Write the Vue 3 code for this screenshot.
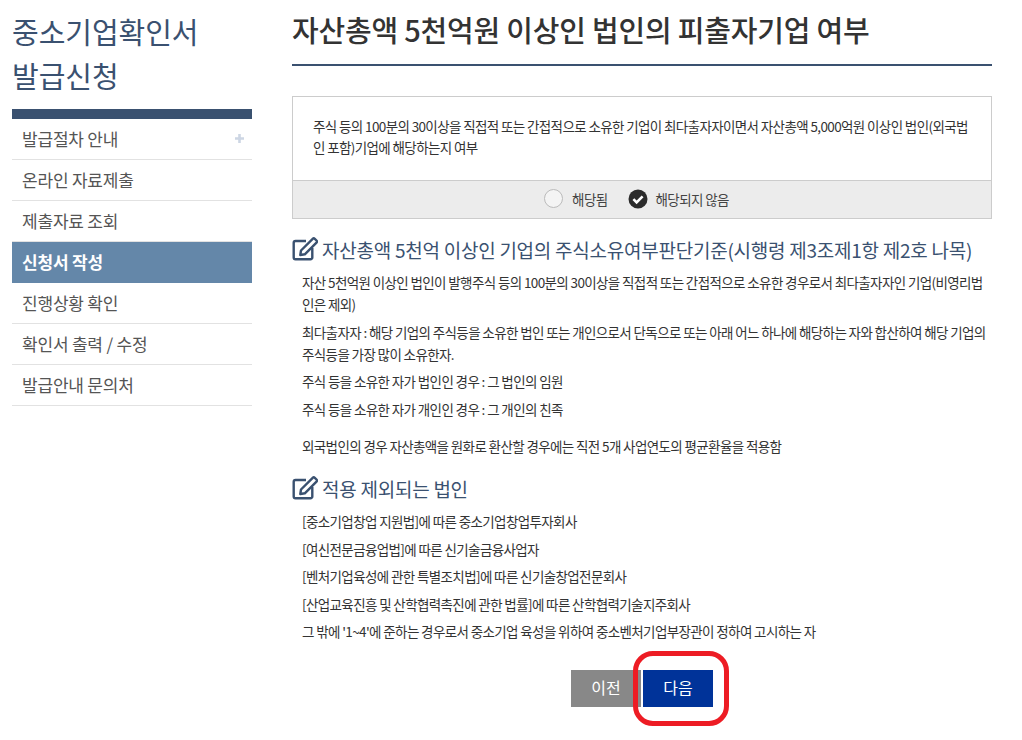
<script setup>
const menu = [
  { label: '발급절차 안내', plus: true },
  { label: '온라인 자료제출' },
  { label: '제출자료 조회' },
  { label: '신청서 작성', active: true },
  { label: '진행상황 확인' },
  { label: '확인서 출력 / 수정' },
  { label: '발급안내 문의처' },
]
const exclusions = [
  '[중소기업창업 지원법]에 따른 중소기업창업투자회사',
  '[여신전문금융업법]에 따른 신기술금융사업자',
  '[벤처기업육성에 관한 특별조치법]에 따른 신기술창업전문회사',
  '[산업교육진흥 및 산학협력촉진에 관한 법률]에 따른 산학협력기술지주회사',
  "그 밖에 '1~4'에 준하는 경우로서 중소기업 육성을 위하여 중소벤처기업부장관이 정하여 고시하는 자",
]
</script>

<template>
  <div class="page">
    <aside class="side">
      <h2 class="side-title">중소기업확인서<br />발급신청</h2>
      <ul class="menu">
        <li v-for="m in menu" :key="m.label" class="menu-item" :class="{ active: m.active }">
          <span>{{ m.label }}</span>
          <svg v-if="m.plus" class="plus" viewBox="0 0 9 9" width="9" height="9">
            <path d="M4.500 0v9M0 4.500h9" fill="none" stroke="#cdd6e4" stroke-width="2.600" />
          </svg>
        </li>
      </ul>
    </aside>
    <main class="main">
      <h1 class="title">자산총액 5천억원 이상인 법인의 피출자기업 여부</h1>
      <section class="box">
        <p class="box-text">주식 등의 100분의 30이상을 직접적 또는 간접적으로 소유한 기업이 최다출자자이면서 자산총액 5,000억원 이상인 법인(외국법인 포함)기업에 해당하는지 여부</p>
        <div class="box-foot">
          <span class="radio"></span><span class="opt">해당됨</span>
          <svg class="check" viewBox="0 0 20 20" width="20" height="20">
            <circle cx="10" cy="10" r="9.5" fill="#2b2b2b" />
            <path d="M5.4 10.2l3.2 3.2 6-6" fill="none" stroke="#fff" stroke-width="2.6" />
          </svg>
          <span class="opt">해당되지 않음</span>
        </div>
      </section>

      <h3 class="sub first">
        <svg class="edit" viewBox="0 0 26 24" width="26" height="24">
          <path d="M14 4H3.5A1.8 1.8 0 0 0 1.700 5.800V20.500A1.800 1.800 0 0 0 3.500 22.300H18.500A1.800 1.800 0 0 0 20.300 20.500V11" fill="none" stroke="#3a5170" stroke-width="2.400" />
          <path d="M9 13.500L20.700 1.800a1.500 1.500 0 0 1 2.100 0L24.500 3.500a1.500 1.500 0 0 1 0 2.100L12.800 17.300L8.300 18Z" fill="none" stroke="#3a5170" stroke-width="2.400" stroke-linejoin="round" />
        </svg>
        자산총액 5천억 이상인 기업의 주식소유여부판단기준(시행령 제3조제1항 제2호 나목)
      </h3>
      <div class="body">
        <p>자산 5천억원 이상인 법인이 발행주식 등의 100분의 30이상을 직접적 또는 간접적으로 소유한 경우로서 최다출자자인 기업(비영리법인은 제외)</p>
        <p>최다출자자 : 해당 기업의 주식등을 소유한 법인 또는 개인으로서 단독으로 또는 아래 어느 하나에 해당하는 자와 합산하여 해당 기업의 주식등을 가장 많이 소유한자.</p>
        <p>주식 등을 소유한 자가 법인인 경우 : 그 법인의 임원</p>
        <p>주식 등을 소유한 자가 개인인 경우 : 그 개인의 친족</p>
        <p class="gap">외국법인의 경우 자산총액을 원화로 환산할 경우에는 직전 5개 사업연도의 평균환율을 적용함</p>
      </div>

      <h3 class="sub second">
        <svg class="edit" viewBox="0 0 26 24" width="26" height="24">
          <path d="M14 4H3.5A1.8 1.8 0 0 0 1.700 5.800V20.500A1.800 1.800 0 0 0 3.500 22.300H18.500A1.800 1.800 0 0 0 20.300 20.500V11" fill="none" stroke="#3a5170" stroke-width="2.400" />
          <path d="M9 13.500L20.700 1.800a1.500 1.500 0 0 1 2.100 0L24.500 3.500a1.500 1.500 0 0 1 0 2.100L12.800 17.300L8.300 18Z" fill="none" stroke="#3a5170" stroke-width="2.400" stroke-linejoin="round" />
        </svg>
        적용 제외되는 법인
      </h3>
      <div class="body">
        <p v-for="e in exclusions" :key="e">{{ e }}</p>
      </div>

      <div class="actions">
        <button class="btn prev">이전</button>
        <button class="btn next">다음</button>
        <span class="highlight"></span>
      </div>
    </main>
  </div>
</template>

<style>
html, body { margin: 0; background: #fff; }
</style>

<style scoped>
* { box-sizing: border-box; }
.page {
  display: flex;
  width: 1022px;
  height: 740px;
  overflow: hidden;
  padding-left: 12px;
  font-family: "Noto Sans CJK KR", "Noto Sans", sans-serif;
  color: #333;
}
.side { width: 240px; flex: none; }
.side-title {
  margin: 9px 0 12px;
  font-size: 29px;
  line-height: 44px;
  font-weight: 400;
  letter-spacing: -0.05px;
  color: #3a5170;
  height: 88px;
}
.menu {
  list-style: none;
  margin: 0;
  padding: 0;
  border-top: 10px solid #3a5170;
}
.menu-item {
  display: flex;
  justify-content: space-between;
  align-items: center;
  height: 41px;
  padding: 0 8px 2px 10px;
  border-bottom: 1px solid #e2e2e2;
  font-size: 17px;
  letter-spacing: -0.2px;
  color: #555;
}
.menu-item.active {
  background: #6487a9;
  color: #fff;
  font-weight: 700;
  border-bottom-color: #6487a9;
}
.main { width: 700px; margin-left: 40px; flex: none; }
.title {
  margin: 0;
  height: 66px;
  border-bottom: 2px solid #3a5170;
  font-size: 29px;
  line-height: 58px;
  font-weight: 500;
  letter-spacing: -0.2px;
  color: #333;
}
.box {
  margin-top: 30px;
  border: 1px solid #ccc;
}
.box-text {
  margin: 0;
  height: 83px;
  padding: 19px 20px 0;
  font-size: 13.500px;
  line-height: 21px;
  letter-spacing: -0.62px;
}
.box-foot {
  display: flex;
  align-items: center;
  justify-content: center;
  height: 38px;
  padding: 0 11px 2px 0;
  background: #ececec;
  border-top: 1px solid #ccc;
  font-size: 13.500px;
  letter-spacing: -0.6px;
}
.radio {
  width: 19px;
  height: 19px;
  border: 1px solid #bbb;
  border-radius: 50%;
  background: #f4f4f4;
  margin-right: 9px;
}
.opt { color: #444; }
.check { margin: 0 8px 0 20px; }
.sub {
  display: flex;
  align-items: center;
  margin: 0;
  font-size: 19px;
  font-weight: 400;
  letter-spacing: -0.25px;
  color: #3a5170;
  height: 28px;
  white-space: nowrap;
}
.sub.first { margin-top: 16px; }
.sub.second { margin-top: 17.500px; }
.edit { margin-right: 4px; flex: none; }
.body {
  padding: 8px 0 0 10px;
  font-size: 13.500px;
  letter-spacing: -0.62px;
  color: #333;
}
.body p { margin: 0 0 5.500px; line-height: 22px; }
.body p.gap { margin-top: 15px; }
.actions {
  position: relative;
  display: flex;
  justify-content: center;
  gap: 2px;
  margin-top: 27.500px;
}
.btn {
  width: 70px;
  height: 37px;
  border: 0;
  padding: 0 0 2px;
  color: #fff;
  font: inherit;
  font-size: 16px;
}
.prev { background: #888; }
.next { background: #003399; }
.highlight {
  position: absolute;
  left: 341px;
  top: -19px;
  width: 96px;
  height: 75px;
  border: 5px solid #ed1c24;
  border-radius: 20px;
}
</style>
